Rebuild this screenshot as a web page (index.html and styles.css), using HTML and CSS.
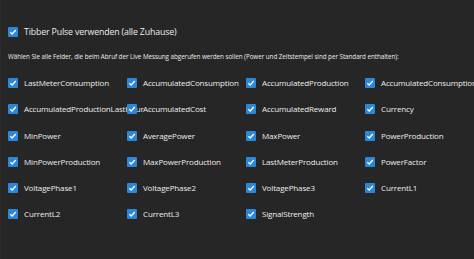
FILE: index.html
```html
<!DOCTYPE html>
<html>
<head>
<meta charset="utf-8">
<link rel="stylesheet" href="styles.css">
</head>
<body>
<div class="page">
  <label class="main-opt"><span class="cb"><svg viewBox="0 0 10 10" width="10" height="10"><path d="M2.3 5.2 L4.2 7 L7.8 3" fill="none" stroke="#fff" stroke-width="1.3"/></svg></span><span class="main-label">Tibber Pulse verwenden (alle Zuhause)</span></label>
  <p class="desc">Wählen Sie alle Felder, die beim Abruf der Live Messung abgerufen werden sollen (Power und Zeitstempel sind per Standard enthalten):</p>
  <div class="grid">
    <label class="item"><span class="cb"><svg viewBox="0 0 10 10" width="10" height="10"><path d="M2.3 5.2 L4.2 7 L7.8 3" fill="none" stroke="#fff" stroke-width="1.3"/></svg></span><span class="lbl">LastMeterConsumption</span></label>
    <label class="item"><span class="cb"><svg viewBox="0 0 10 10" width="10" height="10"><path d="M2.3 5.2 L4.2 7 L7.8 3" fill="none" stroke="#fff" stroke-width="1.3"/></svg></span><span class="lbl">AccumulatedConsumption</span></label>
    <label class="item"><span class="cb"><svg viewBox="0 0 10 10" width="10" height="10"><path d="M2.3 5.2 L4.2 7 L7.8 3" fill="none" stroke="#fff" stroke-width="1.3"/></svg></span><span class="lbl">AccumulatedProduction</span></label>
    <label class="item"><span class="cb"><svg viewBox="0 0 10 10" width="10" height="10"><path d="M2.3 5.2 L4.2 7 L7.8 3" fill="none" stroke="#fff" stroke-width="1.3"/></svg></span><span class="lbl">AccumulatedConsumption</span></label>
    <label class="item"><span class="cb"><svg viewBox="0 0 10 10" width="10" height="10"><path d="M2.3 5.2 L4.2 7 L7.8 3" fill="none" stroke="#fff" stroke-width="1.3"/></svg></span><span class="lbl">AccumulatedProductionLastHour</span></label>
    <label class="item"><span class="cb"><svg viewBox="0 0 10 10" width="10" height="10"><path d="M2.3 5.2 L4.2 7 L7.8 3" fill="none" stroke="#fff" stroke-width="1.3"/></svg></span><span class="lbl">AccumulatedCost</span></label>
    <label class="item"><span class="cb"><svg viewBox="0 0 10 10" width="10" height="10"><path d="M2.3 5.2 L4.2 7 L7.8 3" fill="none" stroke="#fff" stroke-width="1.3"/></svg></span><span class="lbl">AccumulatedReward</span></label>
    <label class="item"><span class="cb"><svg viewBox="0 0 10 10" width="10" height="10"><path d="M2.3 5.2 L4.2 7 L7.8 3" fill="none" stroke="#fff" stroke-width="1.3"/></svg></span><span class="lbl">Currency</span></label>
    <label class="item"><span class="cb"><svg viewBox="0 0 10 10" width="10" height="10"><path d="M2.3 5.2 L4.2 7 L7.8 3" fill="none" stroke="#fff" stroke-width="1.3"/></svg></span><span class="lbl">MinPower</span></label>
    <label class="item"><span class="cb"><svg viewBox="0 0 10 10" width="10" height="10"><path d="M2.3 5.2 L4.2 7 L7.8 3" fill="none" stroke="#fff" stroke-width="1.3"/></svg></span><span class="lbl">AveragePower</span></label>
    <label class="item"><span class="cb"><svg viewBox="0 0 10 10" width="10" height="10"><path d="M2.3 5.2 L4.2 7 L7.8 3" fill="none" stroke="#fff" stroke-width="1.3"/></svg></span><span class="lbl">MaxPower</span></label>
    <label class="item"><span class="cb"><svg viewBox="0 0 10 10" width="10" height="10"><path d="M2.3 5.2 L4.2 7 L7.8 3" fill="none" stroke="#fff" stroke-width="1.3"/></svg></span><span class="lbl">PowerProduction</span></label>
    <label class="item"><span class="cb"><svg viewBox="0 0 10 10" width="10" height="10"><path d="M2.3 5.2 L4.2 7 L7.8 3" fill="none" stroke="#fff" stroke-width="1.3"/></svg></span><span class="lbl">MinPowerProduction</span></label>
    <label class="item"><span class="cb"><svg viewBox="0 0 10 10" width="10" height="10"><path d="M2.3 5.2 L4.2 7 L7.8 3" fill="none" stroke="#fff" stroke-width="1.3"/></svg></span><span class="lbl">MaxPowerProduction</span></label>
    <label class="item"><span class="cb"><svg viewBox="0 0 10 10" width="10" height="10"><path d="M2.3 5.2 L4.2 7 L7.8 3" fill="none" stroke="#fff" stroke-width="1.3"/></svg></span><span class="lbl">LastMeterProduction</span></label>
    <label class="item"><span class="cb"><svg viewBox="0 0 10 10" width="10" height="10"><path d="M2.3 5.2 L4.2 7 L7.8 3" fill="none" stroke="#fff" stroke-width="1.3"/></svg></span><span class="lbl">PowerFactor</span></label>
    <label class="item"><span class="cb"><svg viewBox="0 0 10 10" width="10" height="10"><path d="M2.3 5.2 L4.2 7 L7.8 3" fill="none" stroke="#fff" stroke-width="1.3"/></svg></span><span class="lbl">VoltagePhase1</span></label>
    <label class="item"><span class="cb"><svg viewBox="0 0 10 10" width="10" height="10"><path d="M2.3 5.2 L4.2 7 L7.8 3" fill="none" stroke="#fff" stroke-width="1.3"/></svg></span><span class="lbl">VoltagePhase2</span></label>
    <label class="item"><span class="cb"><svg viewBox="0 0 10 10" width="10" height="10"><path d="M2.3 5.2 L4.2 7 L7.8 3" fill="none" stroke="#fff" stroke-width="1.3"/></svg></span><span class="lbl">VoltagePhase3</span></label>
    <label class="item"><span class="cb"><svg viewBox="0 0 10 10" width="10" height="10"><path d="M2.3 5.2 L4.2 7 L7.8 3" fill="none" stroke="#fff" stroke-width="1.3"/></svg></span><span class="lbl">CurrentL1</span></label>
    <label class="item"><span class="cb"><svg viewBox="0 0 10 10" width="10" height="10"><path d="M2.3 5.2 L4.2 7 L7.8 3" fill="none" stroke="#fff" stroke-width="1.3"/></svg></span><span class="lbl">CurrentL2</span></label>
    <label class="item"><span class="cb"><svg viewBox="0 0 10 10" width="10" height="10"><path d="M2.3 5.2 L4.2 7 L7.8 3" fill="none" stroke="#fff" stroke-width="1.3"/></svg></span><span class="lbl">CurrentL3</span></label>
    <label class="item"><span class="cb"><svg viewBox="0 0 10 10" width="10" height="10"><path d="M2.3 5.2 L4.2 7 L7.8 3" fill="none" stroke="#fff" stroke-width="1.3"/></svg></span><span class="lbl">SignalStrength</span></label>
  </div>
</div>
</body>
</html>
```

FILE: styles.css
```css
html, body {
  margin: 0;
  padding: 0;
  background: #262626;
  width: 474px;
  height: 259px;
  overflow: hidden;
}
.page {
  font-family: "Open Sans", "DejaVu Sans", sans-serif;
  color: #ececec;
  padding: 26px 0 0 7px;
  border-left: 1px solid #2c2c2c;
  box-sizing: border-box;
  height: 259px;
}
.cb {
  display: inline-block;
  position: relative;
  z-index: 1;
  flex: none;
  width: 10px;
  height: 10px;
  background: #2a87da;
  border-radius: 1px;
  overflow: hidden;
}
.cb svg {
  display: block;
}
.main-opt {
  display: flex;
  align-items: center;
  height: 11px;
}
.main-label {
  margin-left: 6px;
  font-size: 8.8px;
  letter-spacing: -0.15px;
  white-space: nowrap;
}
.desc {
  margin: 15px 0 0 0;
  font-size: 6.3px;
  letter-spacing: -0.05px;
  line-height: 9px;
  white-space: nowrap;
}
.grid {
  margin-top: 17px;
  display: grid;
  grid-template-columns: repeat(4, 119px);
  grid-auto-rows: 26.3px;
}
.item {
  display: flex;
  align-items: flex-start;
  white-space: nowrap;
  min-width: 0;
}
.lbl {
  margin-left: 6px;
  font-size: 8px;
  letter-spacing: -0.15px;
  line-height: 10px;
}
```
